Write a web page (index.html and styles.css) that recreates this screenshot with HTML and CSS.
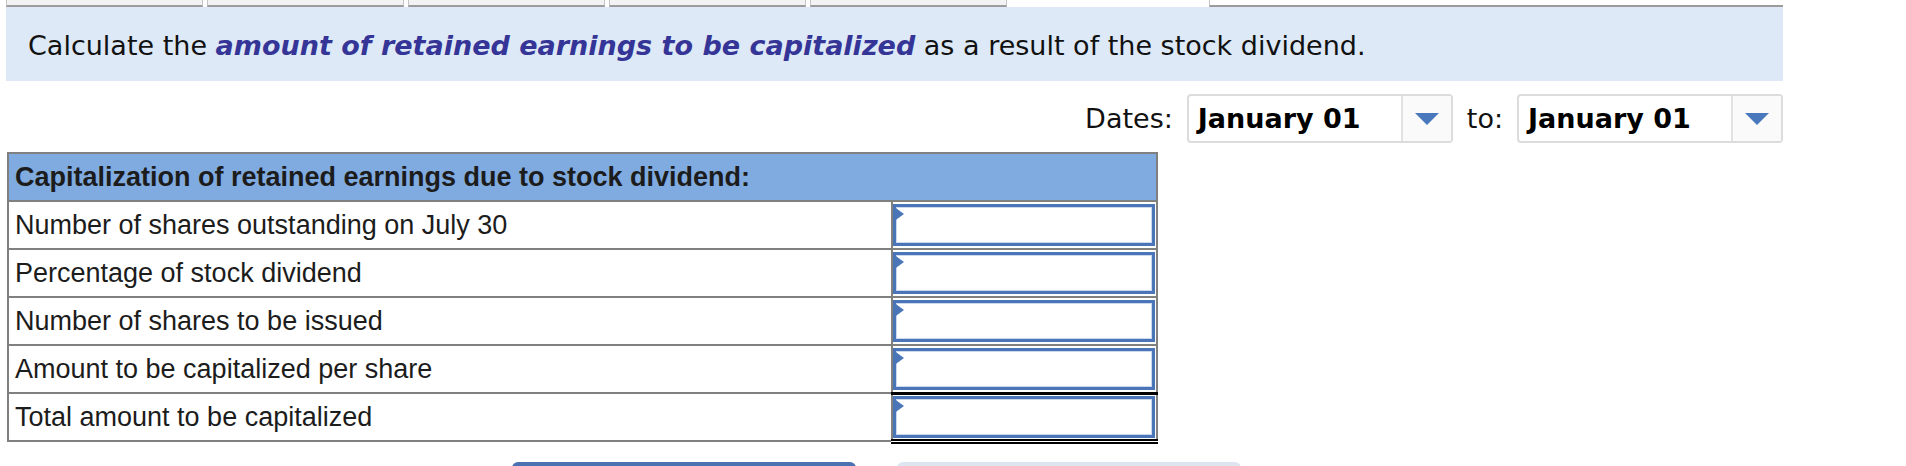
FILE: index.html
```html
<!DOCTYPE html>
<html>
	<head>
		<meta charset="UTF-8">
		<title>Stock dividend</title>
		<link rel="stylesheet" href="styles.css">
	</head>
	<body>
		<div class="page">
			<ul class="tabs">
				<li class="tab"></li>
				<li class="tab"></li>
				<li class="tab"></li>
				<li class="tab"></li>
				<li class="tab"></li>
				<li class="tab active"></li>
				<li class="tab rest"></li>
			</ul>
			<div class="prompt">
				<p>Calculate the <em>amount of retained earnings to be capitalized</em> as a result of the stock dividend.</p>
			</div>
			<div class="dates">
				<span class="label">Dates:</span>
				<div class="select">
					<span class="value">January 01</span>
					<span class="arrow"><i></i></span>
				</div>
				<span class="label">to:</span>
				<div class="select">
					<span class="value">January 01</span>
					<span class="arrow"><i></i></span>
				</div>
			</div>
			<table class="sheet">
				<tr>
					<th colspan="2">Capitalization of retained earnings due to stock dividend:</th>
				</tr>
				<tr>
					<td class="name">Number of shares outstanding on July 30</td>
					<td class="entry"><div class="box"><input type="text"></div></td>
				</tr>
				<tr>
					<td class="name">Percentage of stock dividend</td>
					<td class="entry"><div class="box"><input type="text"></div></td>
				</tr>
				<tr>
					<td class="name">Number of shares to be issued</td>
					<td class="entry"><div class="box"><input type="text"></div></td>
				</tr>
				<tr>
					<td class="name">Amount to be capitalized per share</td>
					<td class="entry single"><div class="box"><input type="text"></div></td>
				</tr>
				<tr>
					<td class="name">Total amount to be capitalized</td>
					<td class="entry double"><div class="box"><input type="text"></div></td>
				</tr>
			</table>
			<div class="buttons">
				<div class="btn main"></div>
				<div class="btn light"></div>
			</div>
		</div>
	</body>
</html>
```

FILE: styles.css
```css
*{
	padding: 0;
	margin: 0;
	box-sizing: border-box;
}
ul{
	list-style: none;
}
body{
	background: #fff;
	font-family: "DejaVu Sans", Verdana, sans-serif;
	color: #111;
}
.page{
	width: 1783px;
	padding-left: 6px;
}
.tabs{
	display: flex;
	height: 7px;
}
.tab{
	width: 197px;
	margin-right: 4px;
	background: #f3f3f3;
	border-left: 1px solid #c4c4c4;
	border-right: 1px solid #c4c4c4;
	border-bottom: 2px solid #9c9c9c;
}
.tab.active{
	width: 198px;
	margin-right: 0;
	background: #fff;
	border: none;
}
.tab.rest{
	flex: 1;
	margin-right: 0;
	background: #fff;
	border-right: none;
}
.prompt{
	height: 74px;
	padding: 3px 0 0 22px;
	background: #dde9f6;
	display: flex;
	align-items: center;
	font-size: 27px;
}
.prompt em{
	font-weight: bold;
	color: #353597;
}
.dates{
	display: flex;
	justify-content: flex-end;
	align-items: center;
	gap: 14px;
	margin-top: 13px;
	height: 49px;
	font-size: 27px;
}
.select{
	display: flex;
	width: 266px;
	height: 49px;
	border: 2px solid #dcdcdc;
	border-radius: 4px;
	background: #fff;
}
.select .value{
	flex: 1;
	padding-left: 9px;
	font-weight: bold;
	color: #000;
	line-height: 45px;
}
.select .arrow{
	width: 50px;
	display: flex;
	align-items: center;
	justify-content: center;
	background: #fafafa;
	border-left: 2px solid #e2e2e2;
}
.select .arrow i{
	width: 0;
	height: 0;
	border-left: 12px solid transparent;
	border-right: 12px solid transparent;
	border-top: 12px solid #4a78bd;
}
.sheet{
	margin: 9px 0 0 1px;
	width: 1151px;
	border-collapse: collapse;
	border: 2px solid #808080;
	font-family: "Liberation Sans", Arial, sans-serif;
	font-size: 27px;
	color: #1c1c1c;
}
.sheet th{
	height: 48px;
	padding: 0 6px;
	text-align: left;
	background: #80abe0;
	border: 2px solid #808080;
}
.sheet td{
	height: 48px;
	border: 2px solid #808080;
}
.sheet .name{
	width: 884px;
	padding: 0 6px;
}
.sheet .entry{
	padding: 1px 1px 1px 0;
}
.sheet .entry.single{
	border-bottom: 3px solid #000;
}
.sheet .entry.double{
	border-bottom: 5px double #000;
}
.box{
	position: relative;
}
.box::before{
	content: "";
	position: absolute;
	left: 0;
	top: 2px;
	border-left: 11px solid #4a75b7;
	border-top: 8px solid transparent;
	border-bottom: 8px solid transparent;
}
.box input{
	display: block;
	width: 100%;
	height: 42px;
	border: 3px solid #4a75b7;
	box-shadow: inset 0 0 0 1px #c9d8ee;
	background: #fff;
	outline: none;
}
.buttons{
	display: flex;
	gap: 41px;
	margin-top: 18px;
	padding-left: 506px;
}
.btn{
	width: 344px;
	height: 44px;
	border-radius: 6px;
}
.btn.main{
	background: #4a72b3;
}
.btn.light{
	background: #dde5f0;
}
```
